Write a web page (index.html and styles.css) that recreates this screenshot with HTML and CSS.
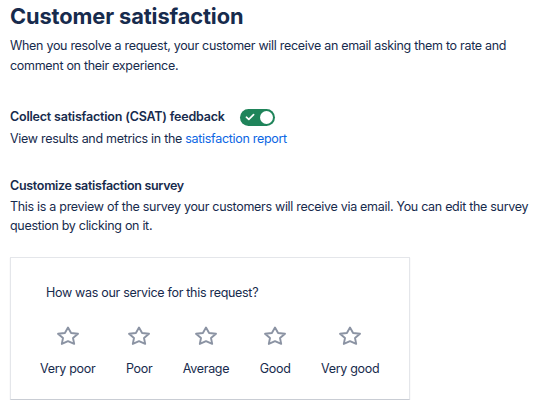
FILE: index.html
```html
<!DOCTYPE html>
<html>
<head>
<meta charset="utf-8">
<link rel="stylesheet" href="styles.css">
</head>
<body>
<main class="page">
  <h1 class="title">Customer satisfaction</h1>
  <p class="text intro">When you resolve a request, your customer will receive an email asking them to rate and comment on their experience.</p>

  <div class="collect-row">
    <span class="label-strong">Collect satisfaction (CSAT) feedback</span>
    <span class="toggle" role="switch" aria-checked="true">
      <svg class="toggle-check" width="10" height="8" viewBox="0 0 10 8"><path d="M1.4 4.2 L3.8 6.4 L8.6 1.6" fill="none" stroke="#fff" stroke-width="1.7" stroke-linecap="round" stroke-linejoin="round"/></svg>
      <span class="toggle-knob"></span>
    </span>
  </div>
  <p class="text results">View results and metrics in the <a class="link" href="#">satisfaction report</a></p>

  <h2 class="subtitle">Customize satisfaction survey</h2>
  <p class="text preview">This is a preview of the survey your customers will receive via email. You can edit the survey question by clicking on it.</p>

  <section class="card">
    <p class="question">How was our service for this request?</p>
    <div class="ratings">
      <div class="rating"><svg class="star" viewBox="0 0 24 24"><path d="M12 3.6 L15.1 8.95 L22 9.8 L17 14 L18.2 19.9 L12 17.1 L5.8 19.9 L7 14 L2 9.8 L8.9 8.95 Z"/></svg><span>Very poor</span></div>
      <div class="rating"><svg class="star" viewBox="0 0 24 24"><path d="M12 3.6 L15.1 8.95 L22 9.8 L17 14 L18.2 19.9 L12 17.1 L5.8 19.9 L7 14 L2 9.8 L8.9 8.95 Z"/></svg><span>Poor</span></div>
      <div class="rating"><svg class="star" viewBox="0 0 24 24"><path d="M12 3.6 L15.1 8.95 L22 9.8 L17 14 L18.2 19.9 L12 17.1 L5.8 19.9 L7 14 L2 9.8 L8.9 8.95 Z"/></svg><span>Average</span></div>
      <div class="rating"><svg class="star" viewBox="0 0 24 24"><path d="M12 3.6 L15.1 8.95 L22 9.8 L17 14 L18.2 19.9 L12 17.1 L5.8 19.9 L7 14 L2 9.8 L8.9 8.95 Z"/></svg><span>Good</span></div>
      <div class="rating"><svg class="star" viewBox="0 0 24 24"><path d="M12 3.6 L15.1 8.95 L22 9.8 L17 14 L18.2 19.9 L12 17.1 L5.8 19.9 L7 14 L2 9.8 L8.9 8.95 Z"/></svg><span>Very good</span></div>
    </div>
  </section>
</main>
</body>
</html>
```

FILE: styles.css
```css
* { box-sizing: border-box; }
html, body { margin: 0; padding: 0; background: #fff; }
body {
  font-family: Inter, "Noto Sans", "Liberation Sans", sans-serif;
  color: #172B4D;
  font-size: 12.5px;
  line-height: 20px;
  letter-spacing: -0.3px;
}
.page { padding: 2px 0 0 10px; }
.title {
  margin: 0;
  font-size: 21.8px;
  line-height: 28px;
  font-weight: 700;
  letter-spacing: -0.1px;
}
.text { margin: 0; }
.intro { margin-top: 6px; }
.collect-row {
  margin-top: 31px;
  display: flex;
  align-items: center;
  gap: 15px;
  height: 20px;
}
.label-strong { font-weight: 600; letter-spacing: -0.2px; }
.toggle {
  position: relative;
  display: inline-flex;
  align-items: center;
  width: 35px;
  height: 17px;
  border-radius: 9px;
  background: #1F845A;
  padding-left: 5px;
}
.toggle-knob {
  position: absolute;
  right: 2px;
  top: 2px;
  width: 13px;
  height: 13px;
  border-radius: 50%;
  background: #fff;
}
.results { margin-top: 2px; }
.link { color: #0C66E4; text-decoration: none; }
.subtitle {
  margin: 27px 0 0 0;
  font-size: 12.5px;
  line-height: 20px;
  font-weight: 600;
}
.preview { margin-top: 1px; line-height: 19px; }
.card {
  margin-top: 22px;
  width: 400px;
  height: 143px;
  border: 1px solid #E4E6EA;
  border-bottom-color: #C9CDD4;
  box-shadow: 0 1px 1px rgba(9,30,66,0.13);
  padding: 25px 0 0 29px;
}
.question { margin: 0 0 0 6px; }
.ratings {
  display: flex;
  gap: 30.5px;
  margin-top: 21px;
}
.rating {
  display: flex;
  flex-direction: column;
  align-items: center;
  gap: 12px;
  line-height: 18px;
}
.star {
  width: 24px;
  height: 24px;
  fill: none;
  stroke: #8B93A3;
  stroke-width: 1.9;
  stroke-linejoin: round;
}
```
